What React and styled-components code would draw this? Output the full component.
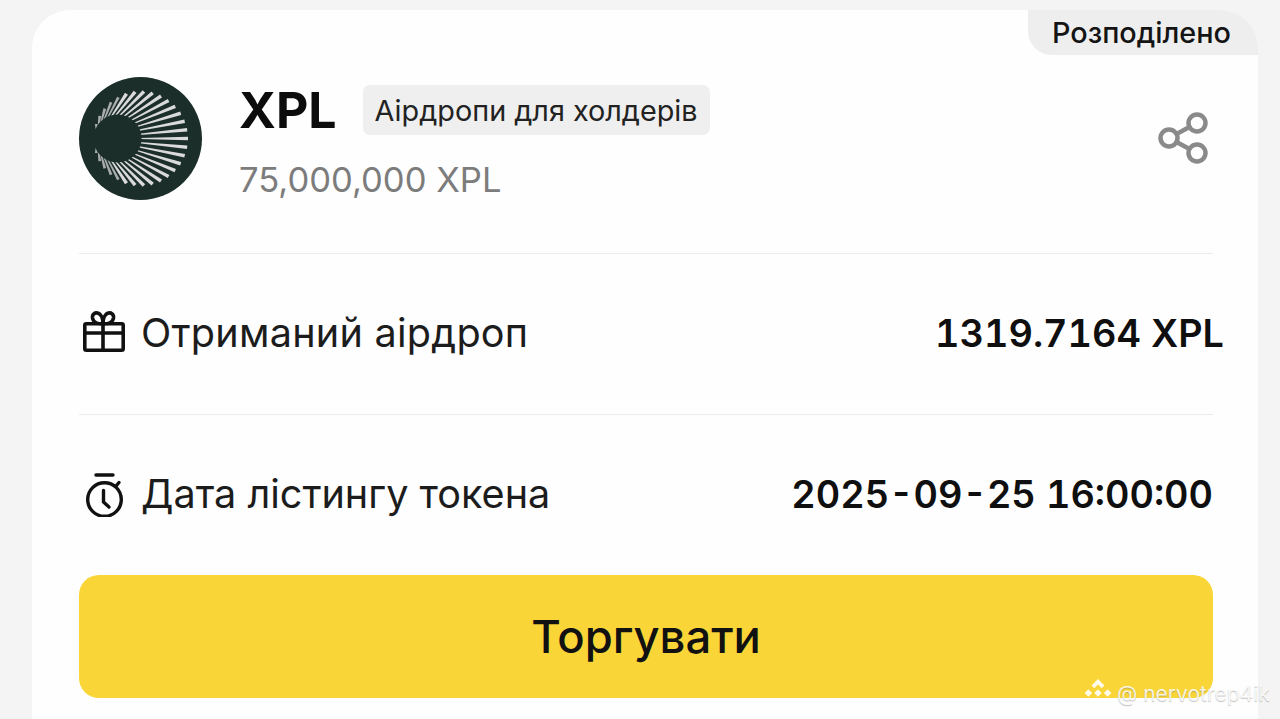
import React from "react";
import styled, { createGlobalStyle } from "styled-components";

const GlobalStyle = createGlobalStyle`
  html, body {
    margin: 0;
    height: 100%;
    overflow: hidden;
    background: #f4f4f4;
    font-family: "Inter", "Noto Sans", sans-serif;
  }
`;

const Page = styled.div`
  height: 719px;
  padding: 10px 22px 0 32px;
  box-sizing: border-box;
  overflow: hidden;
`;

const Card = styled.div`
  position: relative;
  height: 760px;
  box-sizing: border-box;
  padding: 67px 45px 0 47px;
  background: #fefefe;
  border-radius: 38px 38px 0 0;
`;

const StatusBadge = styled.div`
  position: absolute;
  top: 0;
  right: 0;
  width: 230px;
  height: 45px;
  box-sizing: border-box;
  padding: 6px 0 0 24px;
  background: #eeeeee;
  border-radius: 0 38px 0 24px;
  font-size: 28.8px;
  line-height: 34px;
  font-weight: 500;
  color: #141414;
`;

const Header = styled.div`
  display: flex;
  align-items: flex-start;
  height: 176px;
  border-bottom: 1px solid #ebebeb;
`;

const TokenInfo = styled.div`
  display: flex;
  flex-direction: column;
  margin-left: 37px;
  padding-top: 8px;
`;

const TitleRow = styled.div`
  display: flex;
  align-items: center;
  gap: 26px;
`;

const Title = styled.span`
  font-size: 50px;
  line-height: 50px;
  font-weight: 700;
  color: #0c0c0c;
`;

const Tag = styled.span`
  padding: 0 12px;
  height: 50px;
  display: flex;
  align-items: center;
  background: #efefef;
  border-radius: 7px;
  font-size: 28.8px;
  color: #222222;
`;

const Amount = styled.span`
  margin-top: 23px;
  font-size: 34.6px;
  line-height: 42px;
  color: #7c7c7c;
`;

const ShareButton = styled.div`
  margin: 35px 4px 0 auto;
  width: 52px;
  height: 52px;
`;

const Row = styled.div`
  display: flex;
  align-items: center;
  justify-content: space-between;
  height: 158px;
  padding-bottom: 2px;
  border-bottom: ${(p) => (p.$divided ? "1px solid #ebebeb" : "none")};
`;

const Label = styled.div`
  display: flex;
  align-items: center;
  gap: 14px;
  font-size: 39.6px;
  letter-spacing: ${(p) => (p.$wide ? 0.25 : 0)}px;
  color: #1c1c1c;
`;

const Value = styled.span`
  margin-right: ${(p) => (p.$overhang ? -11 : 0)}px;
  font-size: 37.8px;
  font-weight: 600;
  font-variant-numeric: tabular-nums;
  color: #0f0f0f;
`;

const TradeButton = styled.button`
  display: block;
  width: 100%;
  height: 123px;
  padding: 0;
  border: none;
  border-radius: 20px;
  background: #fad537;
  font-family: inherit;
  font-size: 45.4px;
  font-weight: 500;
  color: #111111;
`;

const Watermark = styled.div`
  position: absolute;
  left: 1083px;
  top: 678px;
  display: flex;
  align-items: center;
  gap: 4px;
  font-size: 21px;
  color: rgba(255, 255, 255, 0.85);
  text-shadow: 0 1px 1px rgba(120, 120, 120, 0.45);
`;

// rays of the XPL coin: each goes from the inner disc out to an offset ring,
// getting wider on the way, and bunching into a grey crescent on the left
const rays = Array.from({ length: 31 }, (_, i) => {
  const deg = -162 + (i * 324) / 30;
  const a = (deg * Math.PI) / 180;
  const c = Math.cos(a);
  const s = Math.sin(a);
  const x1 = 38.5 + 22 * c;
  const y1 = 61.5 + 22 * s;
  const x2 = 62 + 47 * c;
  const y2 = 61.5 + 47 * s;
  const len = Math.hypot(x2 - x1, y2 - y1) || 1;
  const nx = -(y2 - y1) / len;
  const ny = (x2 - x1) / len;
  const w = Math.abs(deg) > 110 ? 1.4 : 1.8;
  return {
    fill: Math.abs(deg) > 110 ? "#a9adab" : "#dadada",
    points: [
      [x1 + nx * 0.6, y1 + ny * 0.6],
      [x2 + nx * w, y2 + ny * w],
      [x2 - nx * w, y2 - ny * w],
      [x1 - nx * 0.6, y1 - ny * 0.6],
    ]
      .map((p) => p.join(","))
      .join(" "),
  };
});

const CoinLogo = () => (
  <svg width="123" height="123" viewBox="0 0 123 123" style={{ flexShrink: 0 }}>
    <circle cx="61.5" cy="61.5" r="61.5" fill="#1b2e2a" />
    {rays.map((r, i) => (
      <polygon key={i} points={r.points} fill={r.fill} />
    ))}
    <circle cx="38.5" cy="61.5" r="24" fill="#1b2e2a" />
  </svg>
);

const ShareIcon = () => (
  <svg width="52" height="52" viewBox="0 0 52 52" fill="none" stroke="#8a8a8a" strokeWidth="4.5">
    <circle cx="12" cy="26" r="8.5" />
    <circle cx="40" cy="11" r="8.5" />
    <circle cx="40" cy="41" r="8.5" />
    <path d="M19.5 22 32.5 15M19.5 30 32.5 37" />
  </svg>
);

const GiftIcon = () => (
  <svg width="48" height="46" viewBox="0 0 48 46" fill="none" stroke="#111" strokeWidth="3.6" strokeLinejoin="round">
    <rect x="5.8" y="13.8" width="38.4" height="26.4" rx="1.5" />
    <path d="M5.8 23H44.2M24 13.8V40.2" />
    <path d="M24 13.8C20 13.8 14.5 13.8 13.5 8 13 4 16 2.5 18.5 3 22 3.8 24 8.5 24 13.8ZM24 13.8C28 13.8 33.5 13.8 34.5 8 35 4 32 2.5 29.5 3 26 3.8 24 8.5 24 13.8Z" />
  </svg>
);

const TimerIcon = () => (
  <svg width="48" height="46" viewBox="0 0 48 46" fill="none" stroke="#111" strokeWidth="3.4" strokeLinecap="round">
    <circle cx="25.5" cy="28.5" r="16.8" />
    <path d="M17 4H34M37 15 40 11.5M24.5 19.5V31L30 36" />
  </svg>
);

const App = () => (
  <>
    <GlobalStyle />
    <Page>
      <Card>
        <StatusBadge>Розподілено</StatusBadge>
        <Header>
          <CoinLogo />
          <TokenInfo>
            <TitleRow>
              <Title>XPL</Title>
              <Tag>Аірдропи для холдерів</Tag>
            </TitleRow>
            <Amount>75,000,000 XPL</Amount>
          </TokenInfo>
          <ShareButton>
            <ShareIcon />
          </ShareButton>
        </Header>
        <Row $divided>
          <Label $wide>
            <GiftIcon />
            Отриманий аірдроп
          </Label>
          <Value $overhang>1319.7164 XPL</Value>
        </Row>
        <Row>
          <Label>
            <TimerIcon />
            Дата лістингу токена
          </Label>
          <Value>2025-09-25 16:00:00</Value>
        </Row>
        <TradeButton>Торгувати</TradeButton>
      </Card>
    </Page>
    <Watermark>
      <svg width="30" height="30" viewBox="0 0 28 28" fill="rgba(255,255,255,0.9)">
        <path d="M14 1 20 7 17.5 9.5 14 6 10.5 9.5 8 7ZM5 10.5 8.5 14 5 17.5 1.5 14ZM23 10.5 26.5 14 23 17.5 19.5 14ZM14 10.5 17.5 14 14 17.5 10.5 14ZM8 21 10.5 18.5 14 22 17.5 18.5 20 21 14 27Z" />
      </svg>
      @ nervotrep4ik
    </Watermark>
  </>
);

export default App;
